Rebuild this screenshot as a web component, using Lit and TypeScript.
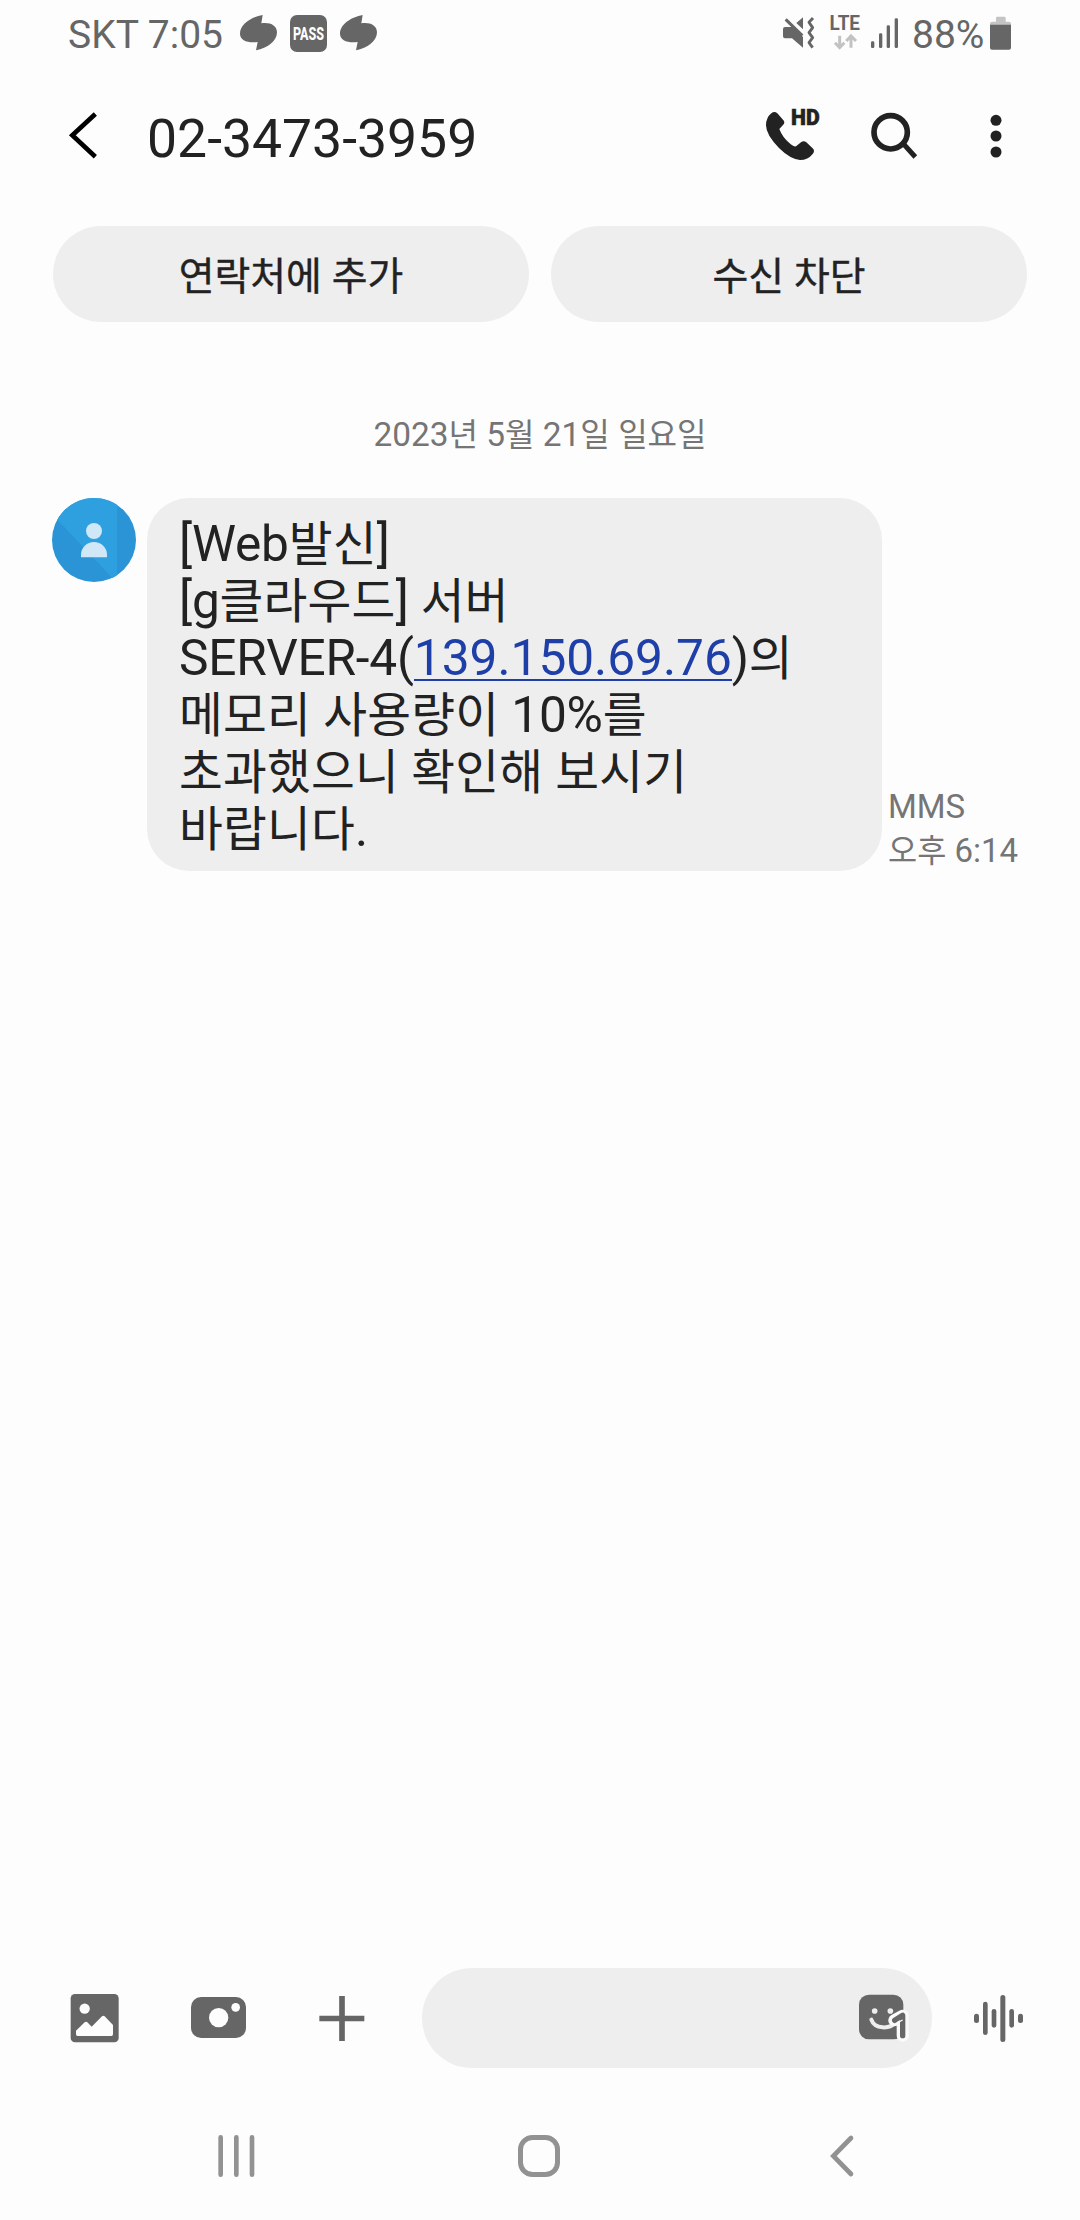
import { LitElement, html, svg, css } from "lit";
import { customElement, property } from "lit/decorators.js";

/** Splits text into Hangul and other runs, so that Hangul can be set slightly smaller. */
const mixed = (text: string) =>
  text
    .split(/([\uAC00-\uD7A3]+)/)
    .filter((run) => run)
    .map((run) => (/[\uAC00-\uD7A3]/.test(run) ? html`<span class="ko">${run}</span>` : run));

const icons: Record<string, { box: string; art: unknown }> = {
  swirl: {
    box: "0 0 111 106",
    art: svg`<path d="M68 0C34 6 0 28 0 56C0 76 24 85 53 81L48 106C82 100 111 78 111 52C111 31 90 21 64 25Z" fill="#666"/>`,
  },
  mute: {
    box: "66 47 102 102",
    art: svg`<g fill="#666"><path d="M75 80H98L129 110V142L96 114H75Q69 114 69 108V86Q69 80 75 80Z"/><path d="M77 57L127 106" stroke="#666" stroke-width="9"/><path d="M129 51V87L109 68Z"/></g><path d="M159 53L147 66L158 82L147 97L158 112L147 127L158 142" fill="none" stroke="#666" stroke-width="8.5" stroke-linejoin="round"/>`,
  },
  arrows: {
    box: "219 103 69 47",
    art: svg`<path d="M236 108V143M222 129L236 144L250 129M270 144V111M256 124L270 109L285 124" fill="none" stroke="#c2c2c2" stroke-width="9"/>`,
  },
  signal: {
    box: "333 52 81 92",
    art: svg`<g fill="#666"><rect x="333" y="122" width="10" height="20" rx="4"/><rect x="357" y="98" width="10" height="44" rx="4"/><rect x="380" y="74" width="10" height="68" rx="4"/><rect x="404" y="53" width="10" height="89" rx="4"/></g>`,
  },
  battery: {
    box: "690 46 63 104",
    art: svg`<path d="M708 63V52Q708 48 712 48H733Q737 48 737 52V63H747Q753 63 753 69V80H690V69Q690 63 696 63Z" fill="#c4c4c4"/><path d="M690 72H753V141Q753 147 747 147H696Q690 147 690 141Z" fill="#666"/>`,
  },
  back: {
    box: "85 64 90 150",
    art: svg`<path d="M167 73L98 137L167 201" fill="none" stroke="#000" stroke-width="14"/>`,
  },
  phone: {
    box: "75 49 165 180",
    art: svg`<path d="M94 71Q103 63 112 71L129 90Q137 98 129 106L118 118Q127 142 148 160Q161 172 168 170L183 158Q191 152 199 158L218 176Q226 184 218 193Q204 211 180 211Q150 208 117 175Q78 135 78 107Q78 84 94 71Z" fill="#222"/><text class="hd" x="153" y="107" textLength="86" lengthAdjust="spacingAndGlyphs">HD</text>`,
  },
  search: {
    box: "390 64 150 150",
    art: svg`<g fill="none" stroke="#222"><circle cx="452" cy="128" r="50" stroke-width="17"/><path d="M489 161L526 202" stroke-width="15"/></g>`,
  },
  more: {
    box: "751 64 36 150",
    art: svg`<g fill="#222"><circle cx="769" cy="92" r="16.5"/><circle cx="769" cy="139" r="16.5"/><circle cx="769" cy="187" r="16.5"/></g>`,
  },
  avatar: {
    box: "36 54 252 252",
    art: svg`<circle cx="162" cy="180" r="126" fill="#2a94d6"/><path d="M52 119A126 126 0 0 1 231 74V286Q224 291 217 294Z" fill="#2e9fdf"/><circle cx="162" cy="153" r="24" fill="#cfe7f7"/><path d="M123 232V224A39 38 0 0 1 201 224V232Z" fill="#cfe7f7"/>`,
  },
  image: {
    box: "90 129 150 150",
    art: svg`<rect x="92" y="132" width="144" height="145" rx="13" fill="#666"/><circle cx="134" cy="176" r="15.5" fill="#fdfdfd"/><path d="M108 242L134 217Q138 213 142 217L155 230L186 199Q190 195 194 199L219 225V253Q219 258 214 258H113Q108 258 108 253Z" fill="#fdfdfd"/>`,
  },
  camera: {
    box: "453 129 165 150",
    art: svg`<rect x="453" y="141" width="165" height="123" rx="30" fill="#666"/><circle cx="536" cy="203" r="29" fill="#fdfdfd"/><circle cx="587" cy="172" r="13" fill="#fdfdfd"/>`,
  },
  plus: {
    box: "830 129 150 150",
    art: svg`<path d="M905 138V273M837 205.500H972" stroke="#666" stroke-width="17"/>`,
  },
  sticker: {
    box: "111 129 159 150",
    art: svg`<rect x="117" y="134" width="133" height="134" rx="30" fill="#666"/><g fill="none" stroke="#eee" stroke-linecap="round"><path d="M154 209C164 238 210 239 226 216" stroke-width="12"/></g><circle cx="164" cy="183" r="8.500" fill="#eee"/><circle cx="211" cy="183" r="8.500" fill="#eee"/><path d="M223 211L248 197V257" fill="none" stroke="#fafafa" stroke-width="36" stroke-linecap="round" stroke-linejoin="round"/><path d="M224 211L248 196V257" fill="none" stroke="#666" stroke-width="16" stroke-linecap="round" stroke-linejoin="round"/><path d="M234 217L248 210" stroke="#fafafa" stroke-width="4"/>`,
  },
  voice: {
    box: "462 129 147 150",
    art: svg`<g fill="#666"><rect x="462" y="191" width="15" height="28" rx="7.500"/><rect x="489" y="155" width="14" height="100" rx="7"/><rect x="515" y="177" width="14" height="56" rx="7"/><rect x="541" y="135" width="15" height="141" rx="7.500"/><rect x="568" y="177" width="14" height="56" rx="7"/><rect x="594" y="191" width="15" height="28" rx="7.500"/></g>`,
  },
  recents: {
    box: "0 0 114 126",
    art: svg`<path d="M8 7V119M55 7V119M102 7V119" stroke="#929292" stroke-width="14" stroke-linecap="round"/>`,
  },
  home: {
    box: "0 0 126 126",
    art: svg`<rect x="7.500" y="7.500" width="111" height="111" rx="36" fill="none" stroke="#929292" stroke-width="15"/>`,
  },
  navback: {
    box: "0 0 72 126",
    art: svg`<path d="M63 9L10 63L63 117" fill="none" stroke="#929292" stroke-width="14" stroke-linecap="round"/>`,
  },
};

@customElement("ui-icon")
class UiIcon extends LitElement {
  @property() name = "";

  static styles = css`
    :host { display: block; flex: none; }
    svg { display: block; overflow: visible; }
    .hd { font: 900 67px Roboto, sans-serif; fill: #222; stroke: #222; stroke-width: 1.5px; }
  `;

  render() {
    const { box, art } = icons[this.name];
    const [, , w, h] = box.split(" ").map(Number);
    return html`<svg viewBox=${box} width=${w / 3} height=${h / 3}>${art}</svg>`;
  }
}

@customElement("app-root")
class AppRoot extends LitElement {
  static styles = css`
    :host {
      display: flex;
      flex-direction: column;
      height: 2220px;
      box-sizing: border-box;
      background: #fdfdfd;
      color: #222;
      font-family: Roboto, "Noto Sans CJK KR", sans-serif;
      overflow: hidden;
    }
    .ko { font-size: 0.96em; }
    .status {
      display: flex;
      align-items: center;
      height: 66px;
      padding: 0 69px 0 68px;
      color: #666;
      font-size: 39px;
      font-weight: 400;
    }
    .clock { box-sizing: border-box; width: 172px; line-height: 46px; padding-top: 3px; white-space: nowrap; }
    .pass {
      width: 37px;
      height: 37px;
      margin: 0 13px;
      border-radius: 7px;
      background: #666;
      display: flex;
      align-items: center;
      justify-content: center;
    }
    .pass svg, .lte svg { display: block; overflow: visible; }
    .pass text { font: 800 17.500px Roboto, sans-serif; fill: #fdfdfd; }
    .right { display: flex; align-items: center; margin-left: auto; }
    .lte { display: flex; flex-direction: column; align-items: center; margin: 0 10px 0 13px; }
    .lte svg { margin: -5px 0 -1px; }
    .lte text { font: 700 19.500px Roboto, sans-serif; fill: #666; }
    .percent { box-sizing: border-box; width: 92px; line-height: 46px; padding: 3px 0 0 14px; white-space: nowrap; }
    .header { display: flex; align-items: center; height: 140px; padding: 0 78px 0 68px; }
    .number { font-size: 53.500px; margin-left: 49px; padding-top: 5px; flex: 1; }
    .tools { display: flex; align-items: center; gap: 50px; }
    .more { margin-left: 20px; }
    .actions { display: flex; gap: 22px; padding: 20px 53px 0; }
    .action {
      flex: 1;
      box-sizing: border-box;
      height: 96px;
      padding-bottom: 3px;
      border-radius: 48px;
      background: #eee;
      display: flex;
      align-items: center;
      justify-content: center;
      font-size: 40.500px;
      -webkit-text-stroke: 0.4px #222;
    }
    .thread { flex: 1; padding-top: 82px; }
    .date { height: 60px; line-height: 62px; text-align: center; font-size: 33.400px; color: #757575; }
    .message { display: flex; padding: 34px 0 0 52px; }
    .bubble {
      box-sizing: border-box;
      width: 735px;
      height: 373px;
      margin: 0 6px 0 11px;
      padding: 18px 32px;
      border-radius: 42px;
      background: #eee;
      font-size: 49.600px;
    }
    .line { height: 57px; line-height: 57px; white-space: nowrap; }
    .latin { letter-spacing: -0.2px; }
    .bubble .ko { letter-spacing: 0.2px; }
    .link { color: #1f3fa8; border-bottom: 2px solid #1f3fa8; display: inline-block; height: 41px; line-height: 41px; }
    .meta { align-self: flex-end; margin-bottom: -3px; font-size: 33px; line-height: 44px; color: #757575; }
    .composer { display: flex; align-items: center; height: 100px; padding: 0 56px 0 70px; }
    .camera { margin-left: 71px; }
    .plus { margin-left: 71px; }
    .input {
      box-sizing: border-box;
      width: 510px;
      height: 100px;
      margin-left: 55px;
      padding-right: 22px;
      border-radius: 50px;
      background: #eee;
      display: flex;
      align-items: center;
      justify-content: flex-end;
    }
    .voice { margin-left: 42px; }
    .nav { box-sizing: border-box; height: 152px; padding: 24px 0 0 218px; display: flex; align-items: center; }
    .home { margin: 0 270px 0 262px; }
  `;

  private lines = ["[Web발신]", "[g클라우드] 서버", "SERVER-4(139.150.69.76)의", "메모리 사용량이 10%를", "초과했으니 확인해 보시기", "바랍니다."];

  private renderLine(line: string) {
    const parts = line.split(/(\d+\.\d+\.\d+\.\d+)/);
    return html`<div class="line">${parts.map((part, i) =>
      i % 2 ? html`<span class="link">${part}</span>` : html`<span class="latin">${mixed(part)}</span>`
    )}</div>`;
  }

  render() {
    return html`
      <div class="status">
        <div class="clock">SKT 7:05</div>
        <ui-icon name="swirl"></ui-icon>
        <div class="pass"><svg width="33" height="24"><text x="1" y="18.500" textLength="31" lengthAdjust="spacingAndGlyphs">PASS</text></svg></div>
        <ui-icon name="swirl"></ui-icon>
        <div class="right">
          <ui-icon name="mute"></ui-icon>
          <div class="lte">
            <svg width="32" height="24"><text x="0.500" y="19" textLength="30.500" lengthAdjust="spacingAndGlyphs">LTE</text></svg>
            <ui-icon name="arrows"></ui-icon>
          </div>
          <ui-icon name="signal"></ui-icon>
          <div class="percent">88%</div>
          <ui-icon name="battery"></ui-icon>
        </div>
      </div>
      <div class="header">
        <ui-icon name="back"></ui-icon>
        <div class="number">02-3473-3959</div>
        <div class="tools">
          <ui-icon name="phone"></ui-icon>
          <ui-icon name="search"></ui-icon>
          <ui-icon class="more" name="more"></ui-icon>
        </div>
      </div>
      <div class="actions">
        <div class="action"><span>${mixed("연락처에 추가")}</span></div>
        <div class="action"><span>${mixed("수신 차단")}</span></div>
      </div>
      <div class="thread">
        <div class="date">${mixed("2023년 5월 21일 일요일")}</div>
        <div class="message">
          <ui-icon name="avatar"></ui-icon>
          <div class="bubble">${this.lines.map((line) => this.renderLine(line))}</div>
          <div class="meta"><div>MMS</div><div>${mixed("오후 6:14")}</div></div>
        </div>
      </div>
      <div class="composer">
        <ui-icon name="image"></ui-icon>
        <ui-icon class="camera" name="camera"></ui-icon>
        <ui-icon class="plus" name="plus"></ui-icon>
        <div class="input"><ui-icon name="sticker"></ui-icon></div>
        <ui-icon class="voice" name="voice"></ui-icon>
      </div>
      <div class="nav">
        <ui-icon name="recents"></ui-icon>
        <ui-icon class="home" name="home"></ui-icon>
        <ui-icon name="navback"></ui-icon>
      </div>
    `;
  }
}
